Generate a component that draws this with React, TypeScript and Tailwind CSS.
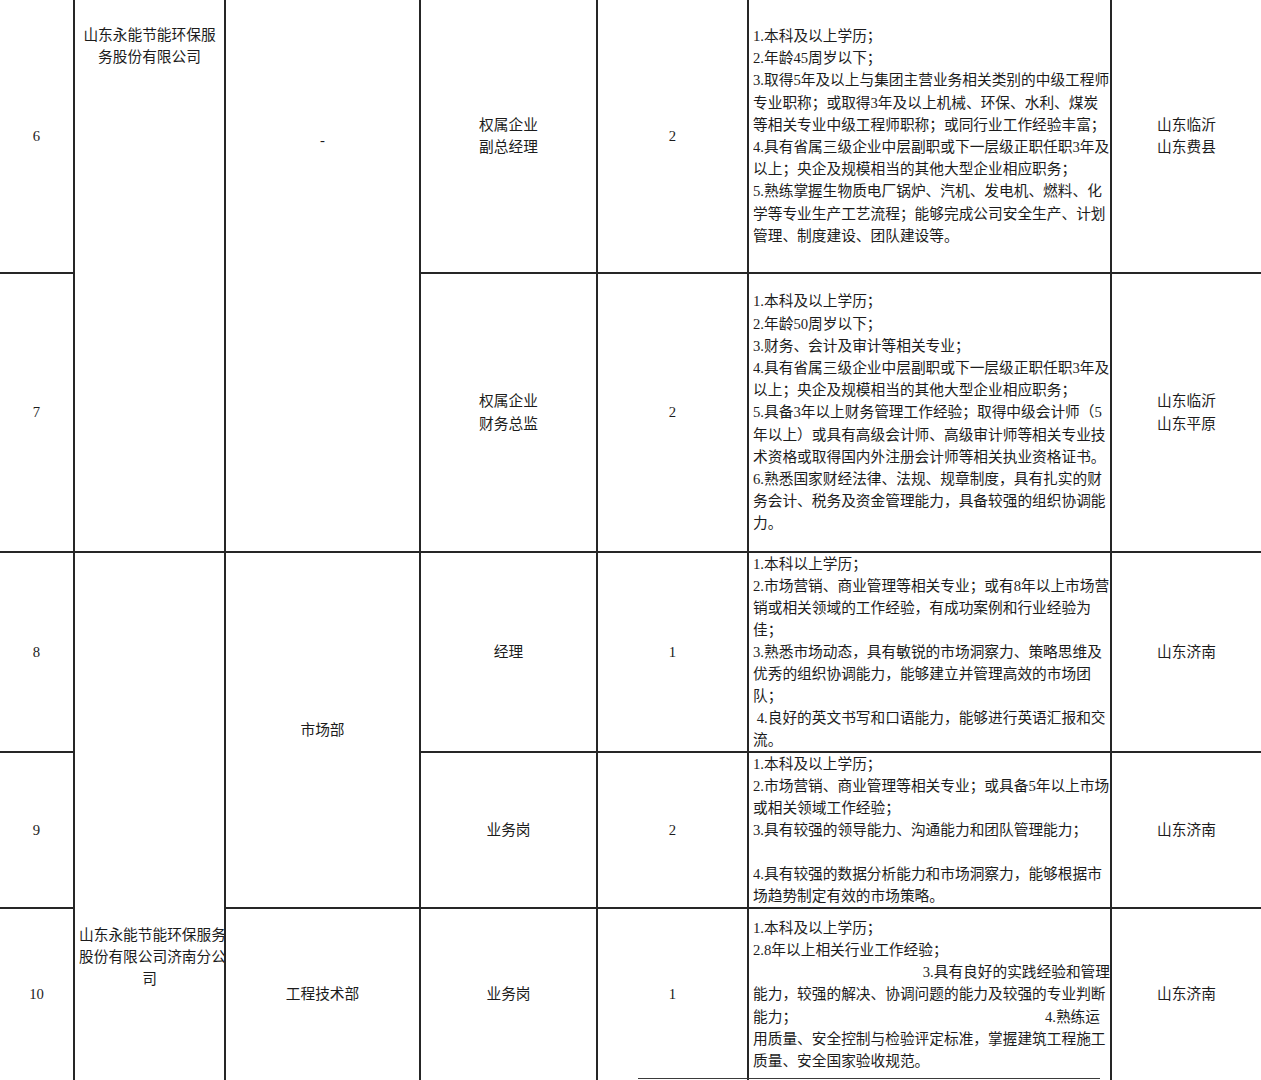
import React from "react";

const cell = "bg-white overflow-hidden";
const center = "bg-white overflow-hidden flex flex-col items-center justify-center text-center";

function Lines({ lines }: { lines: string[] }) {
  return (
    <>
      {lines.map((l, i) => (
        <div key={i} className="whitespace-pre overflow-hidden h-[22.2px]">
          {l === "" ? "\u00a0" : l}
        </div>
      ))}
    </>
  );
}

function Req({ lines, pos }: { lines: React.ReactNode; pos: string }) {
  return <div className={`${pos} bg-white overflow-hidden flex flex-col justify-center pl-[4px]`}>{lines}</div>;
}

export default function App() {
  return (
    <div className="relative w-[1261px] h-[1080px] overflow-hidden bg-white text-[#1c1c1c] text-[14.7px] leading-[22.2px] font-['Liberation_Serif','Noto_Sans_CJK_SC',serif]">
      <div className="grid grid-cols-[73px_149px_193px_175px_149px_361px_149px] grid-rows-[272px_277px_198px_154px_171px] gap-[2px] bg-[#262626] w-[1261px] h-[1080px]">
        {/* Row 6 */}
        <div className={`${center} col-start-1 row-start-1`}>6</div>
        <div className={`${cell} col-start-2 row-start-1 row-span-2 pt-[24px] text-center`}>
          <div>山东永能节能环保服</div>
          <div>务股份有限公司</div>
        </div>
        <div className={`${cell} col-start-3 row-start-1 row-span-2 pt-[129px] text-center`}>-</div>
        <div className={`${center} col-start-4 row-start-1`}>
          <div>权属企业</div>
          <div>副总经理</div>
        </div>
        <div className={`${center} col-start-5 row-start-1`}>2</div>
        <Req
          pos="col-start-6 row-start-1"
          lines={
            <Lines
              lines={[
                "1.本科及以上学历；",
                "2.年龄45周岁以下；",
                "3.取得5年及以上与集团主营业务相关类别的中级工程师",
                "专业职称；或取得3年及以上机械、环保、水利、煤炭",
                "等相关专业中级工程师职称；或同行业工作经验丰富；",
                "4.具有省属三级企业中层副职或下一层级正职任职3年及",
                "以上；央企及规模相当的其他大型企业相应职务；",
                "5.熟练掌握生物质电厂锅炉、汽机、发电机、燃料、化",
                "学等专业生产工艺流程；能够完成公司安全生产、计划",
                "管理、制度建设、团队建设等。",
              ]}
            />
          }
        />
        <div className={`${center} col-start-7 row-start-1`}>
          <div>山东临沂</div>
          <div>山东费县</div>
        </div>

        {/* Row 7 */}
        <div className={`${center} col-start-1 row-start-2`}>7</div>
        <div className={`${center} col-start-4 row-start-2`}>
          <div>权属企业</div>
          <div>财务总监</div>
        </div>
        <div className={`${center} col-start-5 row-start-2`}>2</div>
        <Req
          pos="col-start-6 row-start-2"
          lines={
            <Lines
              lines={[
                "1.本科及以上学历；",
                "2.年龄50周岁以下；",
                "3.财务、会计及审计等相关专业；",
                "4.具有省属三级企业中层副职或下一层级正职任职3年及",
                "以上；央企及规模相当的其他大型企业相应职务；",
                "5.具备3年以上财务管理工作经验；取得中级会计师（5",
                "年以上）或具有高级会计师、高级审计师等相关专业技",
                "术资格或取得国内外注册会计师等相关执业资格证书。",
                "6.熟悉国家财经法律、法规、规章制度，具有扎实的财",
                "务会计、税务及资金管理能力，具备较强的组织协调能",
                "力。",
              ]}
            />
          }
        />
        <div className={`${center} col-start-7 row-start-2`}>
          <div>山东临沂</div>
          <div>山东平原</div>
        </div>

        {/* Row 8 */}
        <div className={`${center} col-start-1 row-start-3`}>8</div>
        <div className={`${cell} col-start-2 row-start-3 row-span-3 pt-[371px]`}>
          <div className="whitespace-nowrap pl-[4px]">山东永能节能环保服务</div>
          <div className="whitespace-nowrap pl-[4px]">股份有限公司济南分公</div>
          <div className="text-center">司</div>
        </div>
        <div className={`${center} col-start-3 row-start-3 row-span-2`}>市场部</div>
        <div className={`${center} col-start-4 row-start-3`}>经理</div>
        <div className={`${center} col-start-5 row-start-3`}>1</div>
        <Req
          pos="col-start-6 row-start-3"
          lines={
            <Lines
              lines={[
                "1.本科以上学历；",
                "2.市场营销、商业管理等相关专业；或有8年以上市场营",
                "销或相关领域的工作经验，有成功案例和行业经验为",
                "佳；",
                "3.熟悉市场动态，具有敏锐的市场洞察力、策略思维及",
                "优秀的组织协调能力，能够建立并管理高效的市场团",
                "队；",
                " 4.良好的英文书写和口语能力，能够进行英语汇报和交",
                "流。",
              ]}
            />
          }
        />
        <div className={`${center} col-start-7 row-start-3`}>山东济南</div>

        {/* Row 9 */}
        <div className={`${center} col-start-1 row-start-4`}>9</div>
        <div className={`${center} col-start-4 row-start-4`}>业务岗</div>
        <div className={`${center} col-start-5 row-start-4`}>2</div>
        <Req
          pos="col-start-6 row-start-4"
          lines={
            <Lines
              lines={[
                "1.本科及以上学历；",
                "2.市场营销、商业管理等相关专业；或具备5年以上市场",
                "或相关领域工作经验；",
                "3.具有较强的领导能力、沟通能力和团队管理能力；",
                "",
                "4.具有较强的数据分析能力和市场洞察力，能够根据市",
                "场趋势制定有效的市场策略。",
              ]}
            />
          }
        />
        <div className={`${center} col-start-7 row-start-4`}>山东济南</div>

        {/* Row 10 */}
        <div className={`${center} col-start-1 row-start-5`}>10</div>
        <div className={`${center} col-start-3 row-start-5`}>工程技术部</div>
        <div className={`${center} col-start-4 row-start-5`}>业务岗</div>
        <div className={`${center} col-start-5 row-start-5`}>1</div>
        <div className="col-start-6 row-start-5 bg-white overflow-hidden flex flex-col justify-center pl-[4px]">
          <div className="whitespace-nowrap h-[22.2px]">1.本科及以上学历；</div>
          <div className="whitespace-nowrap h-[22.2px]">2.8年以上相关行业工作经验；</div>
          <div className="whitespace-nowrap h-[22.2px] text-right">3.具有良好的实践经验和管理</div>
          <div className="whitespace-nowrap h-[22.2px] overflow-hidden">能力，较强的解决、协调问题的能力及较强的专业判断</div>
          <div className="whitespace-nowrap h-[22.2px] flex">
            <span>能力；</span>
            <span className="ml-auto pr-[10px]">4.熟练运</span>
          </div>
          <div className="whitespace-nowrap h-[22.2px] overflow-hidden">用质量、安全控制与检验评定标准，掌握建筑工程施工</div>
          <div className="whitespace-nowrap h-[22.2px]">质量、安全国家验收规范。</div>
        </div>
        <div className={`${center} col-start-7 row-start-5`}>山东济南</div>
      </div>
      <div className="absolute left-[638px] top-[1078px] w-[462px] h-[1px] bg-[#3a3a3a]" />
    </div>
  );
}
